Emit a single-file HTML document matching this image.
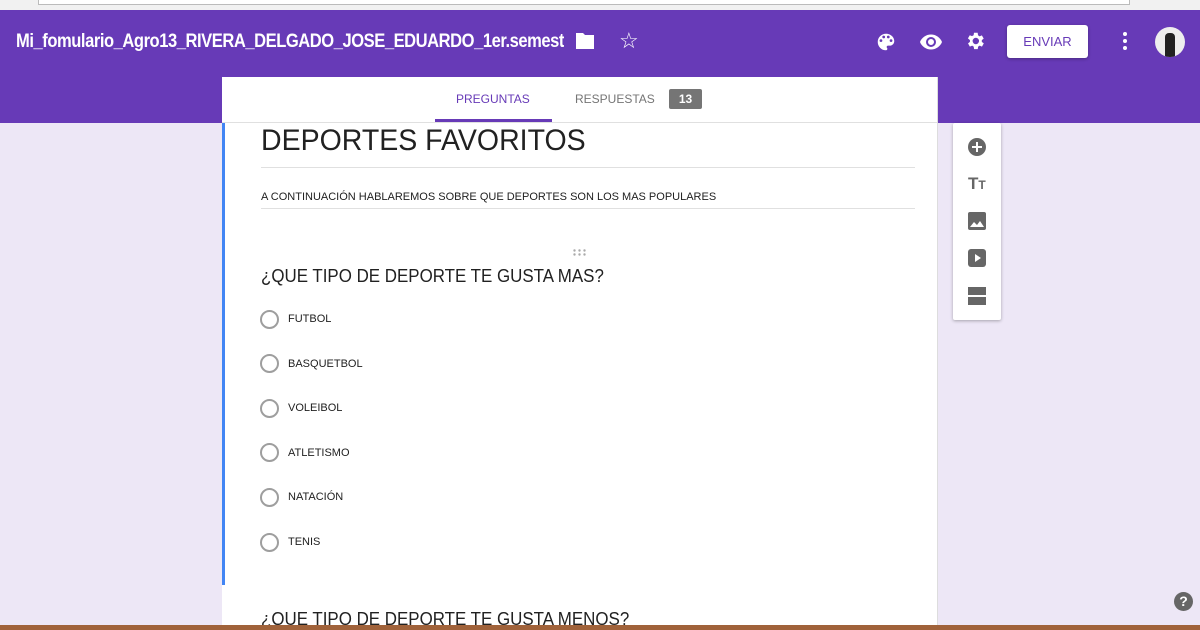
<!DOCTYPE html>
<html><head><style>
body{margin:0;width:1200px;height:630px;overflow:hidden;background:#ede7f6;font-family:"Liberation Sans",sans-serif;position:relative}
.abs{position:absolute}
.r{display:inline-block;border:2px solid #9e9e9e;border-radius:50%;vertical-align:middle;margin-right:9px;box-sizing:border-box;width:19px;height:19px}
</style></head><body>
<div class="abs" style="left:0;top:0;width:1200px;height:10px;background:#f1f1f1"></div>
<div class="abs" style="left:38px;top:0;width:1090px;height:4px;background:#fff;border:1px solid #bbb;border-top:none"></div>
<div class="abs" style="left:0;top:10px;width:1200px;height:113px;background:#673ab7"></div>
<div class="abs" style="left:16px;top:31px;width:548px;overflow:hidden;white-space:nowrap"><div style="color:#fff;font-size:19px;font-weight:bold;letter-spacing:-0.5px;transform:scaleX(0.87);transform-origin:0 0">Mi_fomulario_Agro13_RIVERA_DELGADO_JOSE_EDUARDO_1er.semestre</div></div>
<svg class="abs" style="left:574px;top:32px" width="22" height="18" viewBox="0 0 22 18"><path d="M2 1h7l2 2h9v14H2z" fill="#fff"/></svg>
<div class="abs" style="left:619px;top:28px;color:#fff;font-size:22px">☆</div>
<svg class="abs" style="left:875px;top:31px" width="22" height="22" viewBox="0 0 24 24"><path fill="#fff" d="M12 3a9 9 0 000 18c.8 0 1.5-.7 1.5-1.5 0-.4-.1-.7-.4-1-.2-.3-.4-.6-.4-1 0-.8.7-1.5 1.5-1.5H16c2.8 0 5-2.2 5-5 0-4.4-4-8-9-8zm-5.5 9a1.5 1.5 0 110-3 1.5 1.5 0 010 3zm3-4a1.5 1.5 0 110-3 1.5 1.5 0 010 3zm5 0a1.5 1.5 0 110-3 1.5 1.5 0 010 3zm3 4a1.5 1.5 0 110-3 1.5 1.5 0 010 3z"/></svg>
<svg class="abs" style="left:919px;top:30px" width="24" height="24" viewBox="0 0 24 24"><path fill="#fff" d="M12 4.5C7 4.5 2.7 7.6 1 12c1.7 4.4 6 7.5 11 7.5s9.3-3.1 11-7.5c-1.7-4.4-6-7.5-11-7.5zM12 17a5 5 0 110-10 5 5 0 010 10zm0-8a3 3 0 100 6 3 3 0 000-6z"/></svg>
<svg class="abs" style="left:964px;top:30px" width="22" height="22" viewBox="0 0 24 24"><path fill="#fff" d="M19.4 13a7.5 7.5 0 000-2l2.1-1.6-2-3.5-2.5 1a7 7 0 00-1.7-1L14.9 3h-4l-.4 2.7a7 7 0 00-1.7 1l-2.5-1-2 3.5L6.5 11a7.5 7.5 0 000 2l-2.1 1.6 2 3.5 2.5-1a7 7 0 001.7 1l.4 2.7h4l.4-2.7a7 7 0 001.7-1l2.5 1 2-3.5zM12.9 15.5a3.5 3.5 0 110-7 3.5 3.5 0 010 7z"/></svg>
<div class="abs" style="left:1007px;top:25px;width:81px;height:33px;background:#fff;border-radius:3px;box-shadow:0 1px 3px rgba(0,0,0,.3);color:#673ab7;font-size:13px;text-align:center;line-height:33px">ENVIAR</div>
<svg class="abs" style="left:1118px;top:31px" width="14" height="20"><circle cx="7" cy="3" r="2" fill="#fff"/><circle cx="7" cy="10" r="2" fill="#fff"/><circle cx="7" cy="17" r="2" fill="#fff"/></svg>
<div class="abs" style="left:1155px;top:27px;width:30px;height:30px;border-radius:50%;background:#eee;overflow:hidden"><div style="margin:6px auto 0;width:10px;height:24px;background:#222;border-radius:4px 4px 0 0"></div></div>
<div class="abs" style="left:222px;top:77px;width:715px;height:553px;background:#fff;border-right:1px solid #ddd"></div>
<div class="abs" style="left:222px;top:122px;width:715px;height:1px;background:#e0e0e0"></div>
<div class="abs" style="left:456px;top:92px;color:#673ab7;font-size:12px">PREGUNTAS</div>
<div class="abs" style="left:435px;top:119px;width:117px;height:3px;background:#673ab7"></div>
<div class="abs" style="left:575px;top:92px;color:#757575;font-size:12px">RESPUESTAS</div>
<div class="abs" style="left:669px;top:89px;width:33px;height:20px;background:#757575;color:#fff;font-size:12px;font-weight:bold;text-align:center;line-height:20px;border-radius:2px">13</div>
<div class="abs" style="left:222px;top:123px;width:3px;height:462px;background:#4285f4"></div>
<div class="abs" style="left:261px;top:124px;font-size:30px;color:#212121;transform:scaleX(0.95);transform-origin:0 0">DEPORTES FAVORITOS</div>
<div class="abs" style="left:261px;top:167px;width:654px;height:1px;background:#e0e0e0"></div>
<div class="abs" style="left:261px;top:191px;font-size:11px;color:#212121">A CONTINUACIÓN HABLAREMOS SOBRE QUE DEPORTES SON LOS MAS POPULARES</div>
<div class="abs" style="left:261px;top:208px;width:654px;height:1px;background:#e0e0e0"></div>
<svg class="abs" style="left:573px;top:249px" width="14" height="7"><g fill="#aaa"><circle cx="1.5" cy="1.5" r="1.2"/><circle cx="6.5" cy="1.5" r="1.2"/><circle cx="11.5" cy="1.5" r="1.2"/><circle cx="1.5" cy="5.5" r="1.2"/><circle cx="6.5" cy="5.5" r="1.2"/><circle cx="11.5" cy="5.5" r="1.2"/></g></svg>
<div class="abs" style="left:261px;top:266px;font-size:18px;color:#212121;transform:scaleX(0.94);transform-origin:0 0">¿QUE TIPO DE DEPORTE TE GUSTA MAS?</div>
<div class="abs" style="left:260px;top:297px;font-size:11px;color:#212121;line-height:44.6px">
<div><span class="r"></span>FUTBOL</div>
<div><span class="r"></span>BASQUETBOL</div>
<div><span class="r"></span>VOLEIBOL</div>
<div><span class="r"></span>ATLETISMO</div>
<div><span class="r"></span>NATACIÓN</div>
<div><span class="r"></span>TENIS</div>
</div>
<div class="abs" style="left:261px;top:609px;font-size:18px;color:#212121;transform:scaleX(0.94);transform-origin:0 0">¿QUE TIPO DE DEPORTE TE GUSTA MENOS?</div>
<div class="abs" style="left:953px;top:123px;width:48px;height:197px;background:#fff;box-shadow:0 1px 3px rgba(0,0,0,.3);border-radius:2px"></div>
<svg class="abs" style="left:967px;top:137px" width="20" height="20"><circle cx="10" cy="10" r="9" fill="#666"/><path d="M10 5v10M5 10h10" stroke="#fff" stroke-width="2"/></svg>
<div class="abs" style="left:968px;top:174px;font-size:17px;font-weight:bold;color:#666">T<span style="font-size:12px">T</span></div>
<svg class="abs" style="left:968px;top:212px" width="18" height="18"><rect width="18" height="18" rx="2" fill="#666"/><path d="M2 15l4-5 3 3 3-4 4 6z" fill="#fff"/></svg>
<svg class="abs" style="left:968px;top:249px" width="18" height="18"><rect width="18" height="18" rx="3" fill="#666"/><path d="M7 5l6 4-6 4z" fill="#fff"/></svg>
<svg class="abs" style="left:968px;top:287px" width="18" height="18"><rect width="18" height="8" fill="#666"/><rect y="10" width="18" height="8" fill="#666"/></svg>
<div class="abs" style="left:1174px;top:592px;width:19px;height:19px;border-radius:50%;background:#666;color:#fff;font-size:14px;font-weight:bold;text-align:center;line-height:19px">?</div>
<div class="abs" style="left:0;top:625px;width:1200px;height:5px;background:#a0623a"></div>
</body></html>
